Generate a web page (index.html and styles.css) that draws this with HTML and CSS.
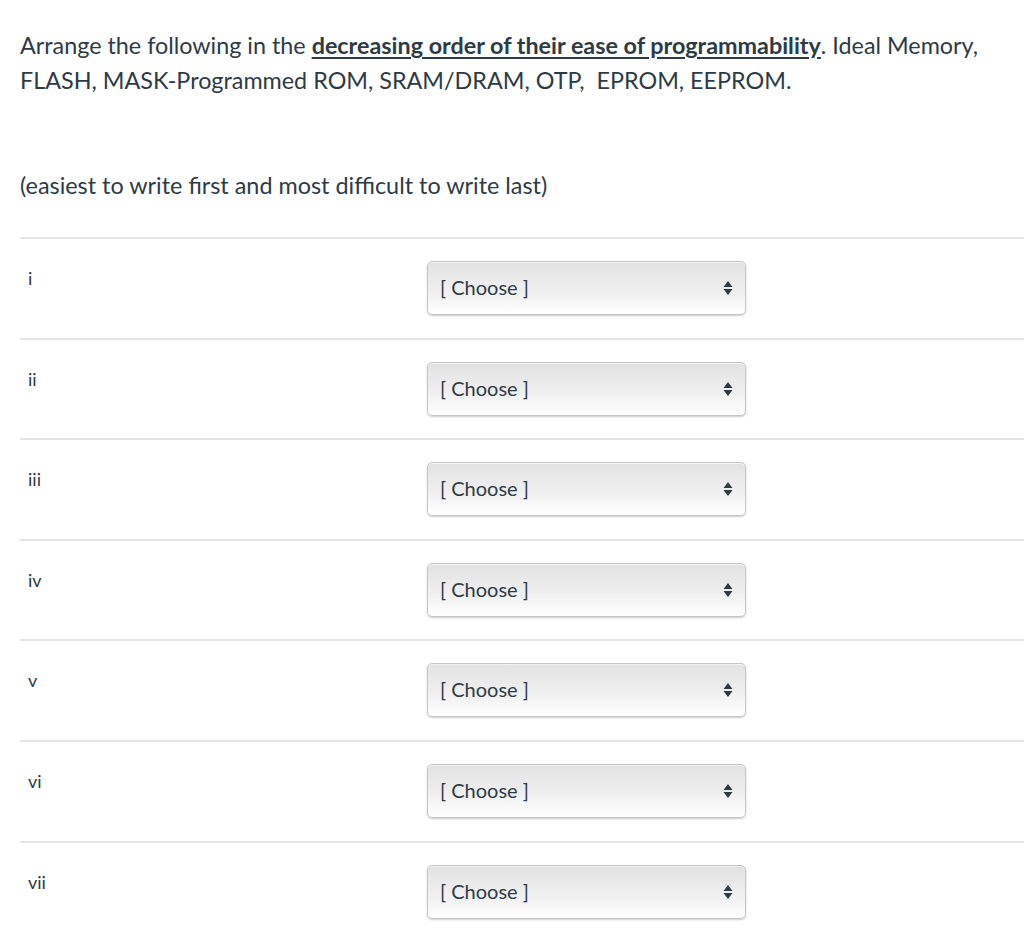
FILE: index.html
```html
<!DOCTYPE html>
<html lang="en">
<head>
<meta charset="utf-8">
<title>Question</title>
<link rel="stylesheet" href="styles.css">
</head>
<body>
<div class="question">
  <p class="prompt">Arrange the following in the <strong class="em">decreasing order of their ease of programmability</strong>. Ideal Memory, FLASH, MASK-Programmed ROM, SRAM/DRAM, OTP,&nbsp; EPROM, EEPROM.</p>
  <p class="note">(easiest to write first and most difficult to write last)</p>
  <div class="answers">
    <div class="row"><div class="label">i</div><div class="pick"><select class="select"><option>[ Choose ]</option></select><svg class="arrows" width="10" height="16" viewBox="0 0 10 16"><path d="M5 1 L9.5 7 H0.5 Z M0.5 9 H9.5 L5 15 Z" fill="#2d3b45"/></svg></div></div>
    <div class="row"><div class="label">ii</div><div class="pick"><select class="select"><option>[ Choose ]</option></select><svg class="arrows" width="10" height="16" viewBox="0 0 10 16"><path d="M5 1 L9.5 7 H0.5 Z M0.5 9 H9.5 L5 15 Z" fill="#2d3b45"/></svg></div></div>
    <div class="row"><div class="label">iii</div><div class="pick"><select class="select"><option>[ Choose ]</option></select><svg class="arrows" width="10" height="16" viewBox="0 0 10 16"><path d="M5 1 L9.5 7 H0.5 Z M0.5 9 H9.5 L5 15 Z" fill="#2d3b45"/></svg></div></div>
    <div class="row"><div class="label">iv</div><div class="pick"><select class="select"><option>[ Choose ]</option></select><svg class="arrows" width="10" height="16" viewBox="0 0 10 16"><path d="M5 1 L9.5 7 H0.5 Z M0.5 9 H9.5 L5 15 Z" fill="#2d3b45"/></svg></div></div>
    <div class="row"><div class="label">v</div><div class="pick"><select class="select"><option>[ Choose ]</option></select><svg class="arrows" width="10" height="16" viewBox="0 0 10 16"><path d="M5 1 L9.5 7 H0.5 Z M0.5 9 H9.5 L5 15 Z" fill="#2d3b45"/></svg></div></div>
    <div class="row"><div class="label">vi</div><div class="pick"><select class="select"><option>[ Choose ]</option></select><svg class="arrows" width="10" height="16" viewBox="0 0 10 16"><path d="M5 1 L9.5 7 H0.5 Z M0.5 9 H9.5 L5 15 Z" fill="#2d3b45"/></svg></div></div>
    <div class="row"><div class="label">vii</div><div class="pick"><select class="select"><option>[ Choose ]</option></select><svg class="arrows" width="10" height="16" viewBox="0 0 10 16"><path d="M5 1 L9.5 7 H0.5 Z M0.5 9 H9.5 L5 15 Z" fill="#2d3b45"/></svg></div></div>
  </div>
</div>
</body>
</html>
```

FILE: styles.css
```css
html, body {
  margin: 0;
  padding: 0;
  background: #ffffff;
}
body {
  font-family: Lato, "Open Sans", "Liberation Sans", sans-serif;
  color: #2d3b45;
}
.question {
  padding: 28px 0 0 20px;
}
.prompt {
  margin: 0;
  font-size: 23.35px;
  line-height: 35px;
  padding-right: 30px;
}
.em {
  font-weight: 700;
  text-decoration: underline;
  text-underline-offset: 3px;
}
.note {
  margin: 70px 0 0 0;
  font-size: 23.4px;
  line-height: 35px;
}
.answers {
  margin-top: 34px;
}
.row {
  display: flex;
  border-top: 2px solid #e5e5e5;
  padding: 22px 0 22.6px 0;
  height: 54px;
}
.label {
  width: 407px;
  padding: 6px 0 0 8px;
  box-sizing: border-box;
  font-size: 18px;
  line-height: 22px;
}
.pick {
  position: relative;
  width: 319px;
  height: 54px;
}
.select {
  -webkit-appearance: none;
  appearance: none;
  width: 319px;
  height: 54px;
  margin: 0;
  padding: 0 0 2px 12px;
  border: 1px solid #c6c6c6;
  border-radius: 5px;
  background: linear-gradient(#e2e2e2, #efefef 55%, #ffffff);
  box-shadow: 0 1px 2px rgba(0,0,0,0.2), inset 0 1px 0 rgba(255,255,255,0.6);
  font-family: Lato, "Open Sans", "Liberation Sans", sans-serif;
  font-size: 20px;
  color: #2d3b45;
}
.arrows {
  position: absolute;
  right: 13px;
  top: 19px;
  pointer-events: none;
}
```
